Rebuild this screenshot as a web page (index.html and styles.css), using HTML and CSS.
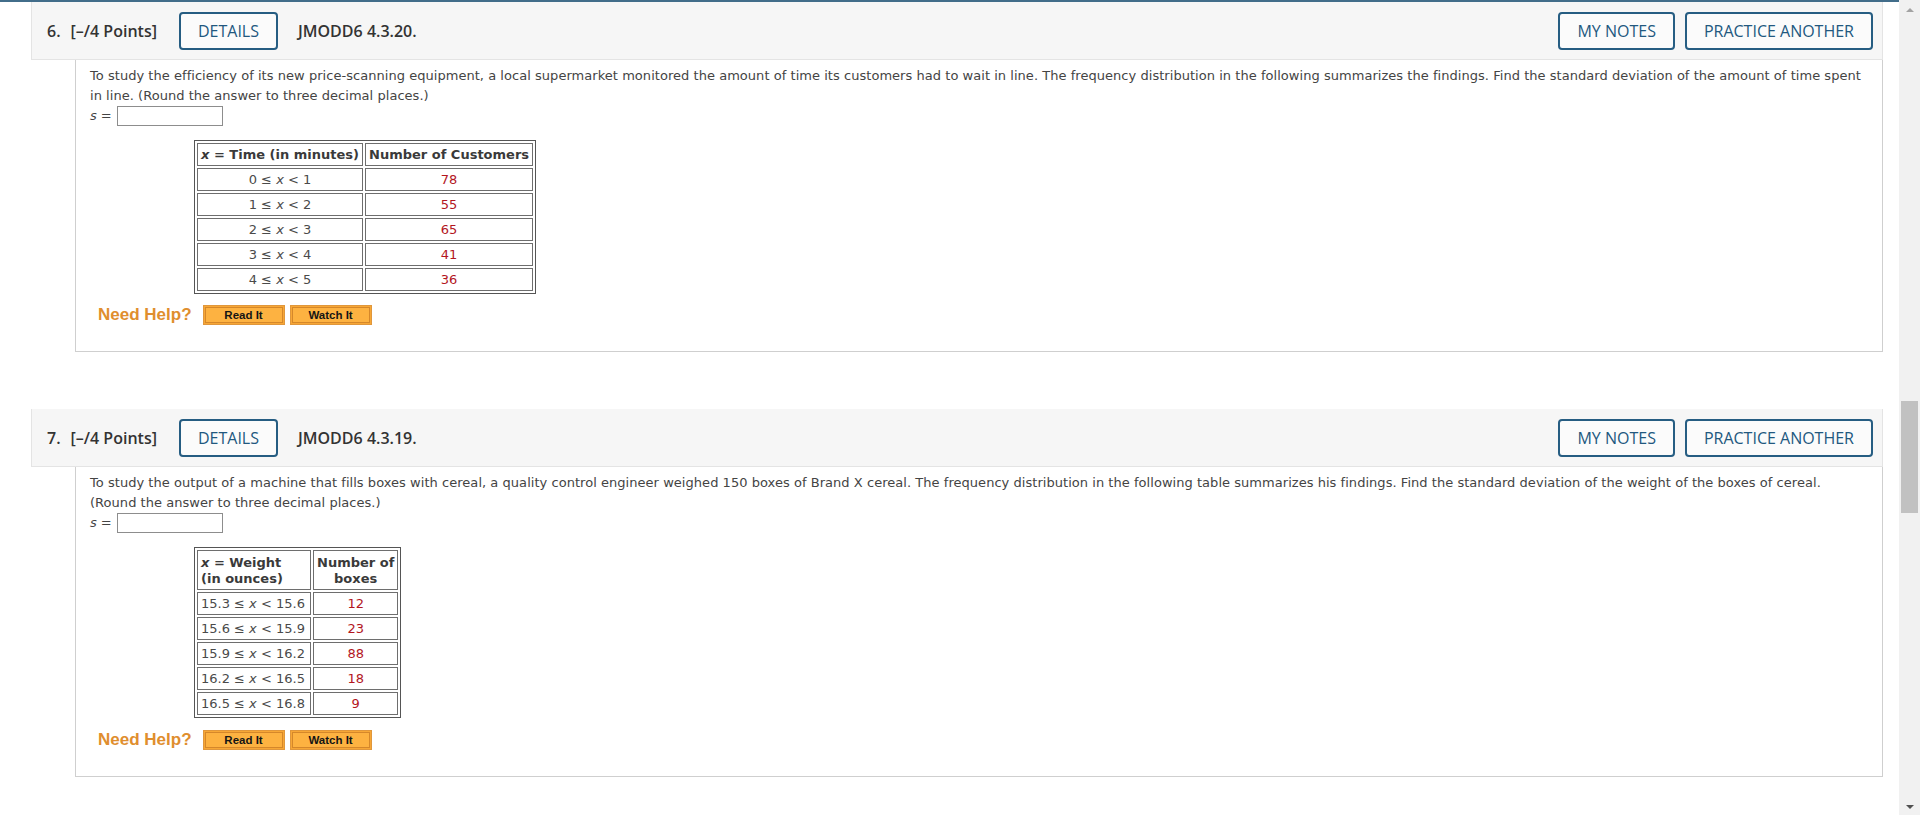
FILE: index.html
```html
<!DOCTYPE html>
<html lang="en">
<head>
<meta charset="utf-8">
<title>Assignment</title>
<link rel="stylesheet" href="styles.css">
</head>
<body>
<div class="window">
  <main class="page">
    <section class="question">
      <header class="q-head">
        <span class="q-num">6.</span>
        <span class="q-points">[–/4 Points]</span>
        <button class="btn-outline details">DETAILS</button>
        <span class="q-code">JMODD6 4.3.20.</span>
        <span class="spacer"></span>
        <button class="btn-outline">MY NOTES</button>
        <button class="btn-outline">PRACTICE ANOTHER</button>
      </header>
      <div class="q-body">
        <p class="prompt">To study the efficiency of its new price-scanning equipment, a local supermarket monitored the amount of time its customers had to wait in line. The frequency distribution in the following summarizes the findings. Find the standard deviation of the amount of time spent<br>in line. (Round the answer to three decimal places.)</p>
        <div class="answer"><i>s</i> = <span class="input-box"></span></div>
        <table class="freq t1">
          <tr><th class="c1"><i>x</i> = Time (in minutes)</th><th class="c2">Number of Customers</th></tr>
          <tr><td class="c1 center">0 ≤ <i>x</i> &lt; 1</td><td class="c2 num">78</td></tr>
          <tr><td class="c1 center">1 ≤ <i>x</i> &lt; 2</td><td class="c2 num">55</td></tr>
          <tr><td class="c1 center">2 ≤ <i>x</i> &lt; 3</td><td class="c2 num">65</td></tr>
          <tr><td class="c1 center">3 ≤ <i>x</i> &lt; 4</td><td class="c2 num">41</td></tr>
          <tr><td class="c1 center">4 ≤ <i>x</i> &lt; 5</td><td class="c2 num">36</td></tr>
        </table>
        <div class="help">
          <span class="help-label">Need Help?</span>
          <button class="help-btn">Read It</button>
          <button class="help-btn">Watch It</button>
        </div>
      </div>
    </section>

    <section class="question">
      <header class="q-head">
        <span class="q-num">7.</span>
        <span class="q-points">[–/4 Points]</span>
        <button class="btn-outline details">DETAILS</button>
        <span class="q-code">JMODD6 4.3.19.</span>
        <span class="spacer"></span>
        <button class="btn-outline">MY NOTES</button>
        <button class="btn-outline">PRACTICE ANOTHER</button>
      </header>
      <div class="q-body">
        <p class="prompt">To study the output of a machine that fills boxes with cereal, a quality control engineer weighed 150 boxes of Brand X cereal. The frequency distribution in the following table summarizes his findings. Find the standard deviation of the weight of the boxes of cereal.<br>(Round the answer to three decimal places.)</p>
        <div class="answer"><i>s</i> = <span class="input-box"></span></div>
        <table class="freq t2">
          <tr><th class="c1 left"><i>x</i> = Weight<br>(in ounces)</th><th class="c2">Number of<br>boxes</th></tr>
          <tr><td class="c1">15.3 ≤ <i>x</i> &lt; 15.6</td><td class="c2 num">12</td></tr>
          <tr><td class="c1">15.6 ≤ <i>x</i> &lt; 15.9</td><td class="c2 num">23</td></tr>
          <tr><td class="c1">15.9 ≤ <i>x</i> &lt; 16.2</td><td class="c2 num">88</td></tr>
          <tr><td class="c1">16.2 ≤ <i>x</i> &lt; 16.5</td><td class="c2 num">18</td></tr>
          <tr><td class="c1">16.5 ≤ <i>x</i> &lt; 16.8</td><td class="c2 num">9</td></tr>
        </table>
        <div class="help">
          <span class="help-label">Need Help?</span>
          <button class="help-btn">Read It</button>
          <button class="help-btn">Watch It</button>
        </div>
      </div>
    </section>
  </main>
  <div class="scrollbar">
    <span class="arrow-up"></span>
    <span class="thumb"></span>
    <span class="sb-fill"></span>
    <span class="arrow-down"></span>
  </div>
</div>
</body>
</html>
```

FILE: styles.css
```css
html, body {
  margin: 0;
  padding: 0;
  background: #ffffff;
  overflow: hidden;
}

.window {
  display: flex;
  height: 815px;
}

.page {
  flex: 1;
  border-top: 2px solid #426d8a;
  padding: 0 16px 0 31px;
  font-family: "DejaVu Sans", Verdana, sans-serif;
}

.question {
  margin-bottom: 57px;
}

.q-head {
  box-sizing: border-box;
  height: 58px;
  display: flex;
  align-items: center;
  background: #f6f6f6;
  border: 1px solid #e4e4e4;
  border-top: none;
  padding: 0 9px 0 15px;
  font-family: "Open Sans", sans-serif;
  color: #333333;
}

.q-num {
  font-weight: 600;
  font-size: 16px;
  margin-right: 10px;
}

.q-points {
  font-weight: 600;
  font-size: 16px;
  margin-right: 22px;
}

.q-code {
  font-weight: 600;
  font-size: 16px;
  margin-left: 20px;
}

.spacer {
  flex: 1;
}

.btn-outline {
  box-sizing: border-box;
  height: 38px;
  padding: 0 17px;
  border: 2px solid #265d82;
  border-radius: 4px;
  background: #fbfbfb;
  color: #22587f;
  font-family: "Open Sans", sans-serif;
  font-size: 16px;
  font-weight: 500;
  line-height: 34px;
  margin-left: 10px;
}

.btn-outline.details {
  margin-left: 0;
}

.q-body {
  margin-left: 44px;
  border: 1px solid #cfcfcf;
  border-top: none;
  padding: 6px 12px 26px 14px;
  color: #444444;
  font-size: 13px;
}

.prompt {
  margin: 0;
  line-height: 20px;
  white-space: nowrap;
  letter-spacing: 0.04px;
}

.answer {
  height: 20px;
  line-height: 20px;
  display: flex;
  align-items: flex-start;
}

.answer i {
  margin-right: 4px;
}

.input-box {
  box-sizing: border-box;
  display: inline-block;
  width: 106px;
  height: 20px;
  margin-left: 5px;
  border: 1px solid #8d8d8d;
  background: #ffffff;
}

.freq {
  margin: 14px 0 0 104px;
  border-collapse: separate;
  border-spacing: 2px;
  border: 1px solid #555555;
  table-layout: fixed;
}

.freq th,
.freq td {
  box-sizing: border-box;
  border: 1px solid #6e6e6e;
  padding: 3px 3px;
  line-height: 15px;
  height: 23px;
  font-size: 13px;
  white-space: nowrap;
}

.freq th {
  font-weight: bold;
  color: #3a3a3a;
  text-align: center;
}

.t2 th {
  line-height: 16px;
  padding: 4px 3px 2px;
}

.freq th.left {
  text-align: left;
}

.freq td {
  color: #4a4a4a;
  text-align: left;
}

.freq td.center {
  text-align: center;
}

.freq td.num {
  text-align: center;
  color: #b3161e;
}

.t1 .c1 { width: 166px; }
.t1 .c2 { width: 167px; }
.t2 .c1 { width: 114px; }
.t2 .c2 { width: 83px; }

.help {
  margin-top: 11px;
  height: 20px;
  display: flex;
  align-items: center;
}

.t2 + .help {
  margin-top: 12px;
}

.help-label {
  margin-left: 8px;
  margin-right: 11px;
  font-family: "Liberation Sans", Arial, sans-serif;
  font-weight: bold;
  font-size: 17px;
  color: #e08e2e;
}

.help-btn {
  box-sizing: border-box;
  width: 82px;
  height: 20px;
  margin-right: 5px;
  padding: 0;
  border: 1px solid #e0973c;
  background: #fdb241;
  box-shadow: inset 0 0 0 1px #f7a736, inset 0 0 0 2px #d5872a;
  font-family: "Liberation Sans", Arial, sans-serif;
  font-weight: bold;
  font-size: 11.5px;
  color: #151515;
}

.scrollbar {
  width: 21px;
  background: #f1f1f1;
  display: flex;
  flex-direction: column;
  align-items: center;
}

.arrow-up {
  margin-top: 8px;
  width: 0;
  height: 0;
  border-left: 4px solid transparent;
  border-right: 4px solid transparent;
  border-bottom: 4px solid #a3a3a3;
}

.thumb {
  margin-top: 389px;
  width: 17px;
  height: 112px;
  background: #c1c1c1;
}

.sb-fill {
  flex: 1;
}

.arrow-down {
  margin-bottom: 6px;
  width: 0;
  height: 0;
  border-left: 4px solid transparent;
  border-right: 4px solid transparent;
  border-top: 4px solid #505050;
}
```
